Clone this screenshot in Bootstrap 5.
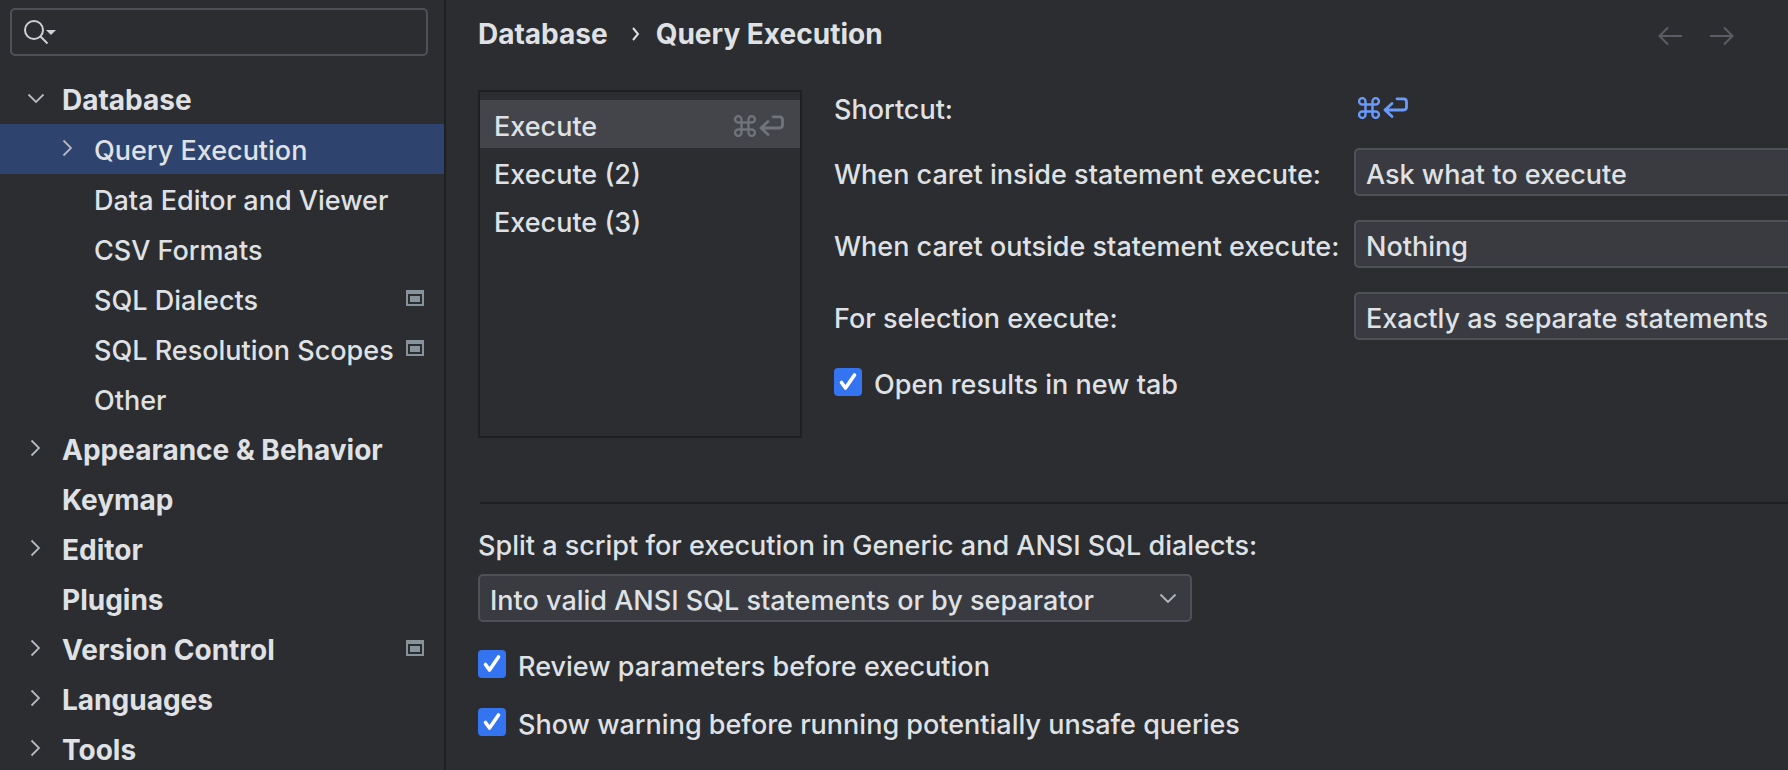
<!DOCTYPE html>
<html lang="en" data-bs-theme="dark">
<head>
<meta charset="utf-8">
<meta name="viewport" content="width=device-width, initial-scale=1">
<title>Settings – Query Execution</title>
<link href="https://cdn.jsdelivr.net/npm/bootstrap@5.3.0/dist/css/bootstrap.min.css" rel="stylesheet">
<style>
  :root { --bg: #2b2d30; --ink: #dfe1e5; --line: #1e1f22; --edge: #4e5157; --field: #393b40; --accent: #3574f0; }
  body { background: var(--bg); color: var(--ink); font-family: Inter, "Liberation Sans", sans-serif; font-size: 27px; font-weight: 500; line-height: 32px; }
  svg { display: block; flex: none; }
  a { color: inherit; text-decoration: none; }

  /* Sidebar */
  .sidebar { width: 446px; border-right: 2px solid var(--line); }
  .search-box { margin: 8px 16px 18px 10px; height: 48px; border: 2px solid var(--edge); border-radius: 5px; padding-left: 12px; }
  .search-box input { background: none; border: 0; outline: 0; color: inherit; }
  .tree a { display: flex; align-items: center; height: 50px; padding: 2px 20px 0 27px; white-space: nowrap; font-size: 28px; font-weight: 700; }
  .tree a.child-item { padding: 4px 20px 0 59px; font-size: 27px; font-weight: 500; }
  .tree a.selected { background: #2e436e; }
  .tree .twisty { width: 18px; height: 18px; margin: -4px 17px 0 0; stroke: #b4b8bf; }
  .tree .scope { margin: -4px 0 0 auto; }
  .tree .child-item .twisty, .tree .child-item .scope { margin-top: -6px; }

  /* Main pane */
  .pane { padding: 18px 0 0 32px; }
  .crumbs { font-size: 28px; font-weight: 700; }
  .nav-arrow { background: none; border: 0; padding: 4px 0 0; stroke: #5a5d63; }
  .console-row { margin-top: 40px; gap: 32px; }
  .consoles { width: 324px; height: 348px; border: 2px solid var(--line); padding-top: 8px; }
  .consoles button { display: flex; align-items: center; justify-content: space-between; width: 100%; height: 48px; padding: 6px 16px 0 14px; background: none; border: 0; color: inherit; font-weight: inherit; text-align: left; }
  .consoles button.selected { background: #43454a; }
  .consoles .keys { margin-top: -2px; }
  .keys { fill: none; stroke: #6f737a; stroke-width: 2.4; }
  .options { display: grid; grid-template-columns: 520px minmax(560px, 1fr); row-gap: 24px; align-items: center; line-height: 28px; }
  .options label, .options .caption-text { white-space: nowrap; padding-top: 6px; }
  .shortcut { padding: 2px 0 0 4px; }
  .shortcut .keys { stroke: #6b9bfa; }
  .form-select { height: 48px; padding: 6px 48px 0 10px; border: 2px solid var(--edge); border-radius: 5px; color: var(--ink); font-size: 27px; font-weight: 500; line-height: 32px;
    background: var(--field) url("data:image/svg+xml,%3Csvg xmlns='http://www.w3.org/2000/svg' viewBox='0 0 18 18'%3E%3Cpath d='M1.5 5.5 9 13l7.500-7.500' fill='none' stroke='%23b4b8bf' stroke-width='1.8'/%3E%3C/svg%3E") no-repeat right 13px center / 18px 18px; }
  .tick { display: flex; align-items: center; gap: 12px; margin-top: 24px; }
  .tick + .tick { margin-top: 22px; }
  .tick .form-check-input { flex: none; width: 28px; height: 28px; margin: 0; border: 0; border-radius: 4px; }
  .tick .form-check-input:checked { background: var(--accent) url("data:image/svg+xml,%3Csvg xmlns='http://www.w3.org/2000/svg' viewBox='0 0 28 28'%3E%3Cpath d='M7.5 14.5 11.5 20 20.5 7' fill='none' stroke='%23fff' stroke-width='3.6' stroke-linecap='round' stroke-linejoin='round'/%3E%3C/svg%3E") center / 28px 28px; }
  .tick label { padding-top: 6px; line-height: 30px; }
  .divider { margin: 64px 0 0 2px; border-top: 2px solid var(--line); }
  .script-options { padding-top: 26px; }
  .split-select { width: 714px; margin-top: 12px; }
</style>
</head>
<body>
<svg class="d-none" aria-hidden="true">
  <symbol id="closed" viewBox="0 0 18 18"><path d="M4.500 1.500 12 9l-7.500 7.500" fill="none" stroke-width="1.800"/></symbol>
  <symbol id="opened" viewBox="0 0 18 18"><path d="M1.500 5.500 9 13l7.500-7.500" fill="none" stroke-width="1.800"/></symbol>
  <symbol id="scope" viewBox="0 0 18 16"><path d="M0 0h18v16H0zM2 4v10h14V4z" fill="#87939a" fill-rule="evenodd"/><path d="M4 6h10v6H4z" fill="#87939a"/></symbol>
  <symbol id="cmd-return" viewBox="0 0 50 22">
    <path d="M7.500 7.500H4.700A3.200 3.200 0 1 1 7.500 4.300V17.700A3.200 3.200 0 1 1 4.700 14.500H17.300A3.200 3.200 0 1 1 14.500 17.700V4.300A3.200 3.200 0 1 1 17.300 7.500Z"/>
    <path d="M39 1.800h6.500q3 0 3 3v5.200q0 3-3 3H27M34 6.500 27 13l7 6.500" stroke-width="2.800" stroke-linecap="round" stroke-linejoin="round"/>
  </symbol>
</svg>

<div class="d-flex vh-100 overflow-hidden">
  <aside class="sidebar flex-shrink-0 overflow-hidden">
    <div class="search-box d-flex align-items-center">
      <svg width="34" height="28" viewBox="0 0 34 28" fill="none" stroke="#ced0d6" stroke-width="2"><circle cx="10" cy="12" r="9"/><path d="m16.500 18.500 7 7"/><path d="M22 12h10l-5 5z" fill="#ced0d6" stroke="none"/></svg>
      <input type="search" class="flex-grow-1" aria-label="Search settings">
    </div>
    <nav class="tree" aria-label="Settings">
      <a href="#"><svg class="twisty"><use href="#opened"/></svg>Database</a>
      <a href="#" class="child-item selected"><svg class="twisty"><use href="#closed"/></svg>Query Execution</a>
      <a href="#" class="child-item"><span class="twisty"></span>Data Editor and Viewer</a>
      <a href="#" class="child-item"><span class="twisty"></span>CSV Formats</a>
      <a href="#" class="child-item"><span class="twisty"></span>SQL Dialects<svg class="scope" width="18" height="16"><use href="#scope"/></svg></a>
      <a href="#" class="child-item"><span class="twisty"></span>SQL Resolution Scopes<svg class="scope" width="18" height="16"><use href="#scope"/></svg></a>
      <a href="#" class="child-item"><span class="twisty"></span>Other</a>
      <a href="#"><svg class="twisty"><use href="#closed"/></svg>Appearance &amp; Behavior</a>
      <a href="#"><span class="twisty"></span>Keymap</a>
      <a href="#"><svg class="twisty"><use href="#closed"/></svg>Editor</a>
      <a href="#"><span class="twisty"></span>Plugins</a>
      <a href="#"><svg class="twisty"><use href="#closed"/></svg>Version Control<svg class="scope" width="18" height="16"><use href="#scope"/></svg></a>
      <a href="#"><svg class="twisty"><use href="#closed"/></svg>Languages</a>
      <a href="#"><svg class="twisty"><use href="#closed"/></svg>Tools</a>
    </nav>
  </aside>

  <main class="pane flex-grow-1 overflow-hidden">
    <header class="d-flex align-items-center">
      <nav class="crumbs d-flex align-items-center" aria-label="Breadcrumb">
        <a href="#">Database</a>
        <svg class="ms-4 me-3" width="8" height="14" viewBox="0 0 8 14" fill="none" stroke="#dfe1e5" stroke-width="2"><path d="m1 1 5 6-5 6"/></svg>
        <a href="#">Query Execution</a>
      </nav>
      <div class="d-flex ms-auto gap-4 me-5 pe-1">
        <button class="nav-arrow" aria-label="Back"><svg width="28" height="20" viewBox="0 0 28 20" fill="none" stroke-width="2"><path d="M26 10H4M12 1.500 3.500 10l8.500 8.500"/></svg></button>
        <button class="nav-arrow" aria-label="Forward"><svg width="28" height="20" viewBox="0 0 28 20" fill="none" stroke-width="2"><path d="M2 10h22M16 1.500l8.500 8.500-8.500 8.500"/></svg></button>
      </div>
    </header>

    <section class="d-flex console-row">
      <div class="consoles flex-shrink-0">
        <button class="selected">Execute<svg class="keys" width="50" height="22" role="img" aria-label="Command Return"><use href="#cmd-return"/></svg></button>
        <button>Execute (2)</button>
        <button>Execute (3)</button>
      </div>
      <div class="flex-grow-1">
        <div class="options">
          <span class="caption-text">Shortcut:</span>
          <a href="#" class="shortcut"><svg class="keys" width="50" height="22" role="img" aria-label="Command Return"><use href="#cmd-return"/></svg></a>
          <label for="inside">When caret inside statement execute:</label>
          <select id="inside" class="form-select"><option>Ask what to execute</option></select>
          <label for="outside">When caret outside statement execute:</label>
          <select id="outside" class="form-select"><option>Nothing</option></select>
          <label for="selection">For selection execute:</label>
          <select id="selection" class="form-select"><option>Exactly as separate statements</option></select>
        </div>
        <div class="tick"><input class="form-check-input" type="checkbox" id="newtab" checked><label for="newtab">Open results in new tab</label></div>
      </div>
    </section>

    <div class="divider"></div>

    <section class="script-options">
      <label for="split" class="d-block">Split a script for execution in Generic and ANSI SQL dialects:</label>
      <select id="split" class="form-select split-select"><option>Into valid ANSI SQL statements or by separator</option></select>
      <div class="tick"><input class="form-check-input" type="checkbox" id="review" checked><label for="review">Review parameters before execution</label></div>
      <div class="tick"><input class="form-check-input" type="checkbox" id="warn" checked><label for="warn">Show warning before running potentially unsafe queries</label></div>
    </section>
  </main>
</div>
<script src="https://cdn.jsdelivr.net/npm/bootstrap@5.3.0/dist/js/bootstrap.bundle.min.js"></script>
</body>
</html>
